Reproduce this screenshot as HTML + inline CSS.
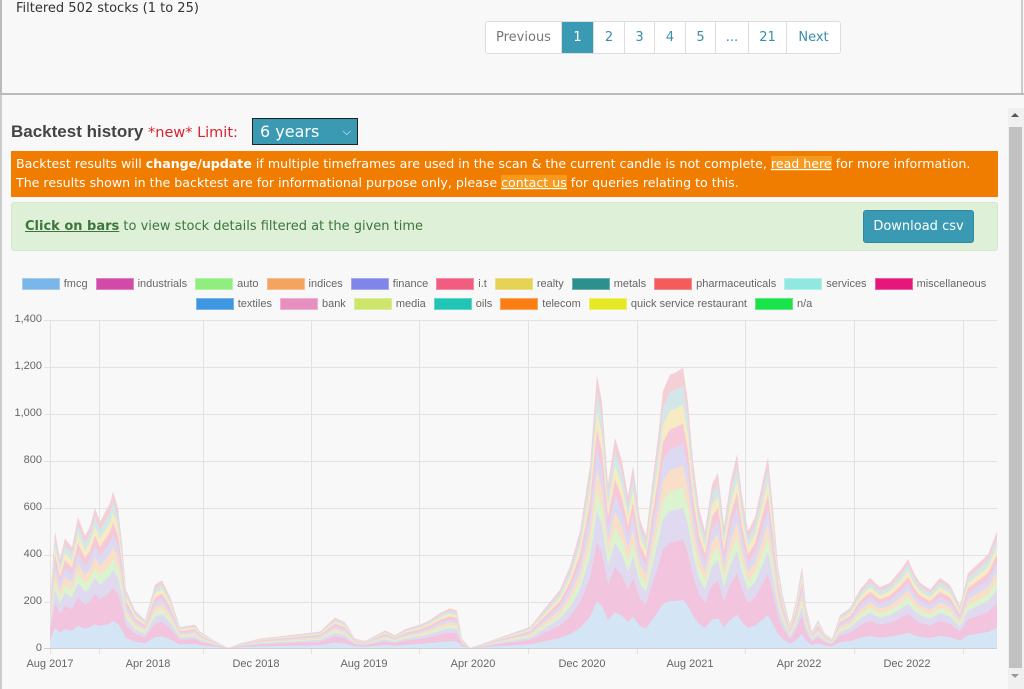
<!DOCTYPE html>
<html><head><meta charset="utf-8">
<style>
*{margin:0;padding:0;box-sizing:border-box}
body{width:1024px;height:689px;overflow:hidden;background:#f8f8f8;font-family:"DejaVu Sans",Verdana,sans-serif;position:relative;color:#333}
.abs{position:absolute}
.pg{position:absolute;top:21px;left:485px;height:33px;display:flex;border:1px solid #ddd;border-radius:3px;background:#fff}
.pg div{height:31px;line-height:31px;font-size:13px;color:#3a8fa8;text-align:center;border-left:1px solid #ddd}
.pg div:first-child{border-left:none;color:#777}
.pg .act{background:#3a9ab3;color:#fff}
.leg{position:absolute;left:0;width:1008px;display:flex;justify-content:center;font-family:"Liberation Sans",Arial,sans-serif;font-size:11px;color:#666}
.leg span{display:flex;align-items:center;margin:0 4px}
.leg i{display:inline-block;width:38px;height:12px;margin-right:4px;border:1px solid rgba(255,255,255,.3)}
.yl{position:absolute;right:982px;font-family:"Liberation Sans",Arial,sans-serif;font-size:11px;color:#666}
.xl{position:absolute;top:658px;font-family:"Liberation Sans",Arial,sans-serif;font-size:11px;color:#666;transform:translateX(-50%)}
</style></head><body>
<div class="abs" style="left:0;top:0;width:2px;height:94px;background:#bbb"></div>
<div class="abs" style="left:1021px;top:0;width:2px;height:94px;background:#ccc"></div>
<div class="abs" style="left:16px;top:1px;font-size:13px;color:#333">Filtered 502 stocks (1 to 25)</div>
<div class="pg">
<div style="width:75px">Previous</div><div class="act" style="width:32px">1</div><div style="width:31px">2</div><div style="width:30px">3</div><div style="width:31px">4</div><div style="width:30px">5</div><div style="width:33px">...</div><div style="width:38px">21</div><div style="width:54px">Next</div>
</div>
<div class="abs" style="left:0;top:93px;width:1024px;height:2px;background:#bbb"></div>

<div class="abs" style="left:11px;top:122px;font-family:'Liberation Sans',Arial,sans-serif;font-size:17px;font-weight:bold;color:#444">Backtest history <span style="font-weight:normal;color:#d9232e;font-family:'DejaVu Sans',Verdana,sans-serif;font-size:14.5px">*new* Limit:</span></div>
<div class="abs" style="left:252px;top:118px;width:106px;height:27px;background:#3a9ab3;border:1px solid #222;color:#fff;font-size:16px;padding-left:7px;line-height:25px">6 years<span style="position:absolute;right:6px;top:0;font-size:11px">&#x2335;</span></div>

<div class="abs" style="left:11px;top:151px;width:987px;height:46px;background:#f07c00;color:#fff;font-size:12.6px;line-height:19px;padding:3px 5px;white-space:nowrap;overflow:hidden">Backtest results will <b>change/update</b> if multiple timeframes are used in the scan &amp; the current candle is not complete, <u style="background:#f59a1e">read here</u> for more information.<br>The results shown in the backtest are for informational purpose only, please <u style="background:#f59a1e">contact us</u> for queries relating to this.</div>

<div class="abs" style="left:11px;top:202px;width:987px;height:49px;background:#dff0d8;border:1px solid #d3e8c9;border-radius:3px"></div>
<div class="abs" style="left:25px;top:219px;font-size:13px;color:#3c763d"><b><u>Click on bars</u></b> to view stock details filtered at the given time</div>
<div class="abs" style="left:863px;top:210px;width:111px;height:33px;background:#3a9ab3;border:1px solid #2e8aa2;border-radius:3px;color:#fff;font-size:13px;text-align:center;line-height:32px">Download csv</div>

<div class="leg" style="top:278px">
<span><i style="background:#7ab6ea"></i>fmcg</span><span><i style="background:#d24aa8"></i>industrials</span><span><i style="background:#90ee7e"></i>auto</span><span><i style="background:#f4a460"></i>indices</span><span><i style="background:#8085e9"></i>finance</span><span><i style="background:#f15c80"></i>i.t</span><span><i style="background:#e4d354"></i>realty</span><span><i style="background:#2b908f"></i>metals</span><span><i style="background:#f45b5b"></i>pharmaceuticals</span><span><i style="background:#91e8e1"></i>services</span><span><i style="background:#e6177a"></i>miscellaneous</span>
</div>
<div class="leg" style="top:298px">
<span><i style="background:#3d96e0"></i>textiles</span><span><i style="background:#e78fbf"></i>bank</span><span><i style="background:#cde56a"></i>media</span><span><i style="background:#22c5b5"></i>oils</span><span><i style="background:#fa7e14"></i>telecom</span><span><i style="background:#e5e826"></i>quick service restaurant</span><span><i style="background:#18e34a"></i>n/a</span>
</div>

<div class="yl" style="top:313px">1,400</div>
<div class="yl" style="top:360px">1,200</div>
<div class="yl" style="top:407px">1,000</div>
<div class="yl" style="top:454px">800</div>
<div class="yl" style="top:501px">600</div>
<div class="yl" style="top:548px">400</div>
<div class="yl" style="top:595px">200</div>
<div class="yl" style="top:642px">0</div>

<svg class="abs" style="left:0;top:0" width="1008" height="689">
<g stroke="#e2e2e2" stroke-width="1">
<line x1="44" y1="320.5" x2="997" y2="320.5"/><line x1="44" y1="367.5" x2="997" y2="367.5"/><line x1="44" y1="414.5" x2="997" y2="414.5"/><line x1="44" y1="461.5" x2="997" y2="461.5"/><line x1="44" y1="508.5" x2="997" y2="508.5"/><line x1="44" y1="555.5" x2="997" y2="555.5"/><line x1="44" y1="602.5" x2="997" y2="602.5"/>
<line x1="50.5" y1="320" x2="50.5" y2="654"/><line x1="99.5" y1="320" x2="99.5" y2="654"/><line x1="203.5" y1="320" x2="203.5" y2="654"/><line x1="311.5" y1="320" x2="311.5" y2="654"/><line x1="419.5" y1="320" x2="419.5" y2="654"/><line x1="528.5" y1="320" x2="528.5" y2="654"/><line x1="637.5" y1="320" x2="637.5" y2="654"/><line x1="745.5" y1="320" x2="745.5" y2="654"/><line x1="854.5" y1="320" x2="854.5" y2="654"/><line x1="963.5" y1="320" x2="963.5" y2="654"/>
</g>
<defs>
<polygon id="env" points="50,0 50,200 55,500 60,380 65,470 72,430 78,560 85,480 90,520 95,600 100,540 105,580 110,620 113,670 118,600 122,450 126,250 135,160 145,120 155,270 162,290 170,220 180,90 195,100 200,70 215,30 228,0 240,20 260,40 280,50 300,60 320,70 335,130 345,110 355,40 365,30 385,75 395,55 405,80 420,100 430,120 440,150 450,170 457,160 462,40 470,0 480,15 490,30 510,60 530,90 545,170 560,250 570,350 580,500 590,780 597,1170 602,1050 608,700 615,900 622,800 628,650 633,780 640,550 646,480 652,700 658,900 663,1100 670,1170 676,1180 683,1200 688,1050 693,800 699,600 705,500 712,700 718,750 724,520 730,700 737,830 742,650 748,500 755,560 762,700 768,820 773,600 778,350 783,220 790,100 796,200 802,350 806,180 812,70 818,120 825,60 832,40 840,140 850,170 860,250 870,300 880,260 890,280 900,330 908,380 914,320 920,280 930,250 940,300 950,270 960,180 968,320 978,360 988,400 997,500 997,0"/>
</defs>
<g transform="translate(0,648)">
<use href="#env" transform="scale(1,-0.2336)" fill="#f4cfd6"/>
<use href="#env" transform="scale(1,-0.219)" fill="#d3e6e8"/>
<use href="#env" transform="scale(1,-0.203)" fill="#f6ebc3"/>
<use href="#env" transform="scale(1,-0.187)" fill="#f6c9da"/>
<use href="#env" transform="scale(1,-0.17)" fill="#dcdaf3"/>
<use href="#env" transform="scale(1,-0.152)" fill="#f9dfc8"/>
<use href="#env" transform="scale(1,-0.134)" fill="#dcf3cf"/>
<use href="#env" transform="scale(1,-0.117)" fill="#dfdaf0"/>
<use href="#env" transform="scale(1,-0.09)" fill="#f2c4de"/>
<use href="#env" transform="scale(1,-0.04)" fill="#d4e6f6"/>
</g>
<line x1="44" y1="648.5" x2="997" y2="648.5" stroke="#cfcfcf"/>
</svg>

<div class="xl" style="left:50px">Aug 2017</div>
<div class="xl" style="left:148px">Apr 2018</div>
<div class="xl" style="left:256px">Dec 2018</div>
<div class="xl" style="left:364px">Aug 2019</div>
<div class="xl" style="left:473px">Apr 2020</div>
<div class="xl" style="left:582px">Dec 2020</div>
<div class="xl" style="left:690px">Aug 2021</div>
<div class="xl" style="left:799px">Apr 2022</div>
<div class="xl" style="left:907px">Dec 2022</div>

<div class="abs" style="left:0;top:95px;width:2px;height:594px;background:#ccc"></div>
<div class="abs" style="left:1008px;top:108px;width:16px;height:581px;background:#f0f0f0"></div>
<div class="abs" style="left:1009px;top:127px;width:13px;height:541px;background:#c1c1c1"></div>
<div class="abs" style="left:1011px;top:113px;width:0;height:0;border-left:4px solid transparent;border-right:4px solid transparent;border-bottom:4px solid #555"></div>
<div class="abs" style="left:1011px;top:674px;width:0;height:0;border-left:4px solid transparent;border-right:4px solid transparent;border-top:4px solid #999"></div>
</body></html>
